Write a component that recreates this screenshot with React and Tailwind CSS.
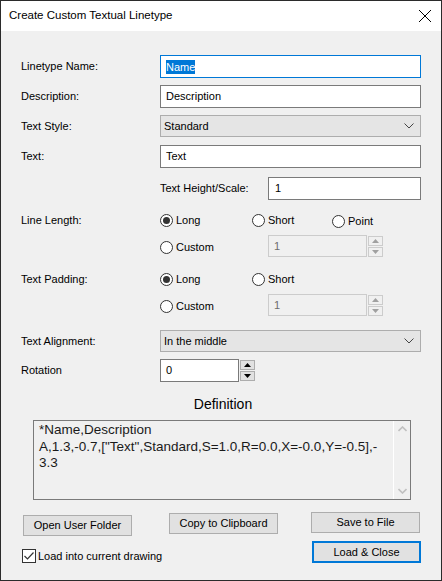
import React from 'react';

const font = { fontFamily: '"Segoe UI", "Liberation Sans", Arial, sans-serif' };

function Radio({ checked, label, className = '' }) {
  return (
    <label className={`flex items-center gap-[3px] ${className}`}>
      <span className="w-[13px] h-[13px] rounded-full border border-[#333333] bg-white flex items-center justify-center">
        {checked && <span className="w-[7px] h-[7px] rounded-full bg-[#333333]" />}
      </span>
      <span>{label}</span>
    </label>
  );
}

function Spin({ disabled }) {
  const box = disabled
    ? 'border-[#cccccc] bg-[#f0f0f0] text-[#a0a0a0]'
    : 'border-[#adadad] bg-[#e1e1e1] text-[#000000]';
  return (
    <div className="flex flex-col gap-[1px] ml-[1px]">
      <div className={`w-[15px] h-[10px] border flex items-center justify-center ${box}`}>
        <svg width="7" height="4" viewBox="0 0 7 4"><path d="M0 4 L3.5 0 L7 4 Z" fill="currentColor" /></svg>
      </div>
      <div className={`w-[15px] h-[10px] border flex items-center justify-center ${box}`}>
        <svg width="7" height="4" viewBox="0 0 7 4"><path d="M0 0 L3.5 4 L7 0 Z" fill="currentColor" /></svg>
      </div>
    </div>
  );
}

function Chevron() {
  return (
    <svg width="10" height="6" viewBox="0 0 10 6" className="mr-[6px]">
      <path d="M0.5 0.5 L5 5 L9.5 0.5" stroke="#444444" strokeWidth="1" fill="none" />
    </svg>
  );
}

function Select({ value }) {
  return (
    <div className="w-[261px] h-full border border-[#adadad] bg-[#e5e5e5] flex items-center justify-between pl-[3px]">
      <span>{value}</span>
      <Chevron />
    </div>
  );
}

function Button({ children, className = '', primary }) {
  return (
    <div
      className={`w-[109px] shrink-0 whitespace-nowrap flex items-center justify-center bg-[#e1e1e1] ${
        primary ? 'h-[22px] border-2 border-[#0078d7]' : 'h-[21px] border border-[#adadad]'
      } ${className}`}
    >
      {children}
    </div>
  );
}

export default function App() {
  return (
    <div
      style={font}
      className="w-[442px] h-[581px] border border-[#2b2b2b] bg-[#f0f0f0] text-[11px] text-black overflow-hidden"
    >
      {/* title bar */}
      <div className="h-[30px] bg-white flex items-center justify-between pl-[8px] pr-[8px]">
        <span className="text-[11.5px]">Create Custom Textual Linetype</span>
        <svg width="14" height="14" viewBox="0 0 14 14" className="mr-[1px]">
          <path d="M1 1 L13 13 M13 1 L1 13" stroke="#000000" strokeWidth="1" />
        </svg>
      </div>

      <div className="pl-[20px]">
        <div className="flex items-center h-[23px] mt-[24px]">
          <span className="w-[139px]">Linetype Name:</span>
          <div className="w-[261px] h-[23px] border border-[#0078d7] bg-white flex items-center pl-[5px]">
            <span className="bg-[#0078d7] text-white leading-[14px]">Name</span>
          </div>
        </div>

        <div className="flex items-center h-[23px] mt-[7px]">
          <span className="w-[139px]">Description:</span>
          <div className="w-[261px] h-[23px] border border-[#7a7a7a] bg-white flex items-center pl-[5px]">
            Description
          </div>
        </div>

        <div className="flex items-center h-[22px] mt-[7px]">
          <span className="w-[139px]">Text Style:</span>
          <Select value="Standard" />
        </div>

        <div className="flex items-center h-[23px] mt-[8px]">
          <span className="w-[139px]">Text:</span>
          <div className="w-[261px] h-[23px] border border-[#7a7a7a] bg-white flex items-center pl-[5px]">
            Text
          </div>
        </div>

        <div className="flex items-center h-[23px] mt-[9px]">
          <span className="w-[139px]" />
          <span className="w-[108px]">Text Height/Scale:</span>
          <div className="w-[153px] h-[23px] border border-[#7a7a7a] bg-white flex items-center pl-[6px]">
            1
          </div>
        </div>

        <div className="flex items-center h-[16px] mt-[12px]">
          <span className="w-[139px]">Line Length:</span>
          <Radio checked label="Long" className="w-[92px]" />
          <Radio label="Short" className="w-[80px]" />
          <Radio label="Point" className="mt-[3px]" />
        </div>

        <div className="flex items-center h-[22px] mt-[7px]">
          <span className="w-[139px]" />
          <Radio label="Custom" className="w-[108px] mt-[2px]" />
          <div className="w-[99px] h-[22px] border border-[#cccccc] bg-[#f0f0f0] text-[#6d6d6d] flex items-center pl-[5px]">
            1
          </div>
          <Spin disabled />
        </div>

        <div className="flex items-center h-[16px] mt-[14px]">
          <span className="w-[139px]">Text Padding:</span>
          <Radio checked label="Long" className="w-[92px]" />
          <Radio label="Short" />
        </div>

        <div className="flex items-center h-[22px] mt-[7px]">
          <span className="w-[139px]" />
          <Radio label="Custom" className="w-[108px] mt-[2px]" />
          <div className="w-[99px] h-[22px] border border-[#cccccc] bg-[#f0f0f0] text-[#6d6d6d] flex items-center pl-[5px]">
            1
          </div>
          <Spin disabled />
        </div>

        <div className="flex items-center h-[22px] mt-[14px]">
          <span className="w-[139px]">Text Alignment:</span>
          <Select value="In the middle" />
        </div>

        <div className="flex items-center h-[23px] mt-[7px]">
          <span className="w-[139px]">Rotation</span>
          <div className="w-[79px] h-[23px] border border-[#7a7a7a] bg-white flex items-center pl-[5px]">
            0
          </div>
          <Spin />
        </div>
      </div>

      <div className="text-center text-[14px] mt-[12px] h-[20px] leading-[20px] pl-[4px]">Definition</div>

      <div className="ml-[32px] mt-[6px] w-[378px] h-[80px] border border-[#7a7a7a] bg-[#f0f0f0] flex">
        <div className="flex-1 pl-[5px] pt-[1px] text-[13.5px] leading-[16.5px] text-[#1a1a1a] whitespace-nowrap">
          <div>*Name,Description</div>
          <div>A,1.3,-0.7,["Text",Standard,S=1.0,R=0.0,X=-0.0,Y=-0.5],-</div>
          <div>3.3</div>
        </div>
        <div className="w-[17px] shrink-0 border-l border-white flex flex-col items-center justify-between py-[5px]">
          <svg width="9" height="6" viewBox="0 0 9 6"><path d="M0.5 5 L4.5 1 L8.5 5" stroke="#c0c0c0" strokeWidth="1.6" fill="none" /></svg>
          <svg width="9" height="6" viewBox="0 0 9 6"><path d="M0.5 1 L4.5 5 L8.5 1" stroke="#c0c0c0" strokeWidth="1.6" fill="none" /></svg>
        </div>
      </div>

      <div className="flex items-start mt-[12px] pl-[22px]">
        <Button className="mt-[3px]">Open User Folder</Button>
        <Button className="ml-[37px] mt-[1px]">Copy to Clipboard</Button>
        <Button className="ml-[33px]">Save to File</Button>
      </div>

      <div className="flex items-start mt-[5px] pl-[21px] pr-[20px]">
        <div className="flex items-center gap-[2px] mt-[7px] whitespace-nowrap">
          <span className="w-[14px] h-[14px] border border-[#333333] bg-white flex items-center justify-center">
            <svg width="10" height="8" viewBox="0 0 10 8"><path d="M0.5 4 L3.5 7 L9.5 0.5" stroke="#333333" strokeWidth="1.2" fill="none" /></svg>
          </span>
          <span>Load into current drawing</span>
        </div>
        <Button primary className="ml-auto">Load &amp; Close</Button>
      </div>
    </div>
  );
}
